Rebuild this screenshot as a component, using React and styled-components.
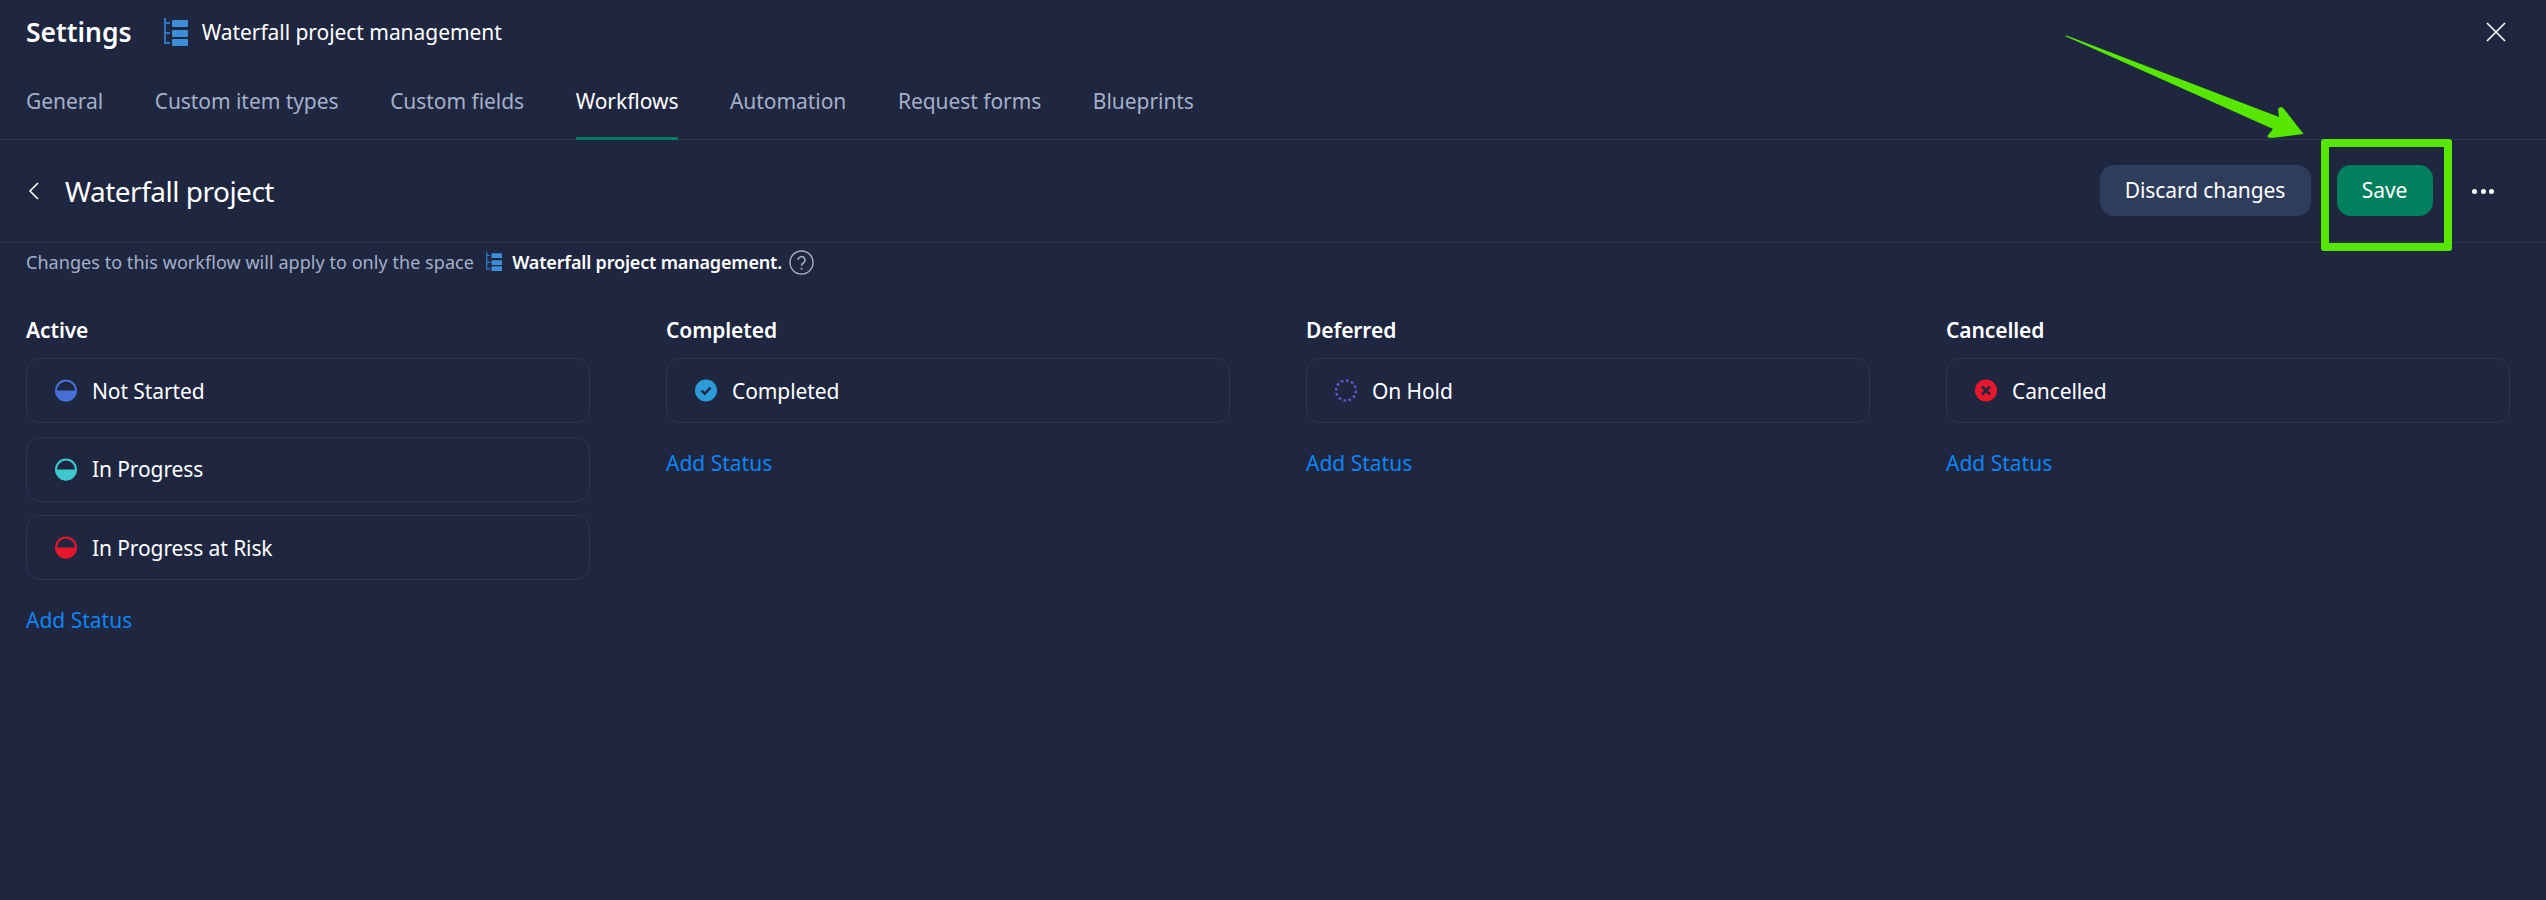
import React from "react";
import styled, { createGlobalStyle } from "styled-components";

const Global = createGlobalStyle`
  html, body { margin: 0; padding: 0; background: #1e2640; }
  body { font-family: "Noto Sans", "Open Sans", sans-serif; color: #fff; }
  * { box-sizing: border-box; }
`;

const Page = styled.div`
  position: relative;
  width: 2546px;
  height: 900px;
  background: #1e2640;
  overflow: hidden;
`;

const Header = styled.header`
  display: flex;
  align-items: center;
  height: 64px;
  padding: 0 40px 0 26px;
`;
const Title = styled.h1`
  margin: 0 32px 0 0;
  font-size: 26.5px;
  font-weight: 600;
`;
const Space = styled.div`
  display: flex;
  align-items: center;
  gap: 14px;
  font-size: 21px;
  letter-spacing: -0.05px;
`;
const Close = styled.button`
  margin-left: auto;
  display: flex;
  padding: 0;
  border: 0;
  background: none;
  color: #fff;
`;

const Tabs = styled.nav`
  display: flex;
  gap: 51.6px;
  height: 76px;
  padding: 0 26px;
  border-bottom: 1px solid #2b3654;
`;
const Tab = styled.div`
  display: flex;
  align-items: center;
  height: 76px;
  font-size: 21px;
  letter-spacing: -0.05px;
  color: ${(p) => (p.$active ? "#fff" : "#a4b0c8")};
  border-bottom: 3px solid ${(p) => (p.$active ? "#01805d" : "transparent")};
`;

const TitleRow = styled.div`
  display: flex;
  align-items: center;
  height: 103px;
  padding: 0 52px 0 28px;
  border-bottom: 1px solid #2b3654;
`;
const Back = styled.button`
  display: flex;
  padding: 0;
  margin-right: 26px;
  border: 0;
  background: none;
  color: #fff;
`;
const WorkflowName = styled.h2`
  margin: 0;
  font-size: 28px;
  font-weight: 400;
  letter-spacing: -0.5px;
`;
const Actions = styled.div`
  margin-left: auto;
  display: flex;
  align-items: center;
`;
const Button = styled.button`
  height: 51px;
  padding: 0;
  width: ${(p) => p.$w}px;
  border: 0;
  border-radius: 14px;
  color: #fff;
  font: inherit;
  font-size: 21px;
  letter-spacing: -0.1px;
  background: ${(p) => p.$bg};
`;
const SaveWrap = styled.div`
  position: relative;
  margin: 0 39.5px 2px 26px;
  display: flex;
`;
const DiscardWrap = styled.div`
  display: flex;
  margin-bottom: 2px;
`;
const Frame = styled.div`
  position: absolute;
  left: -16px;
  right: -19px;
  top: -26px;
  bottom: -35px;
  border: 8px solid #56e600;
  border-radius: 3px;
`;
const More = styled.div`
  display: flex;
  gap: 3.5px;
`;
const Dot = styled.span`
  width: 5px;
  height: 5px;
  border-radius: 50%;
  background: #fff;
`;

const Info = styled.div`
  display: flex;
  align-items: center;
  height: 38px;
  padding-left: 26px;
  font-size: 18px;
  letter-spacing: 0.05px;
  color: #a4b0c8;
`;
const InfoText = styled.span`
  margin-right: 12px;
`;
const InfoSpace = styled.strong`
  margin: 0 7px 0 10px;
  color: #fff;
  font-weight: 600;
  letter-spacing: -0.17px;
`;

const Board = styled.div`
  display: grid;
  grid-template-columns: repeat(4, 564px);
  column-gap: 76px;
  padding: 35px 0 0 26px;
`;
const Column = styled.section`
  display: flex;
  flex-direction: column;
`;
const ColumnTitle = styled.h3`
  margin: 0 0 14px;
  height: 28px;
  line-height: 28px;
  font-size: 21px;
  font-weight: 600;
  letter-spacing: -0.1px;
`;
const Card = styled.div`
  display: flex;
  align-items: center;
  gap: 15px;
  height: 65px;
  margin-bottom: 13.7px;
  padding: 0 28px;
  border: 1px solid #2b3654;
  border-radius: 14px;
  font-size: 21px;
  letter-spacing: -0.1px;
`;
const AddStatus = styled.a`
  display: block;
  margin-top: 12px;
  line-height: 28px;
  font-size: 21px;
  color: #0f85f5;
`;

const ArrowLayer = styled.svg`
  position: absolute;
  left: 2060px;
  top: 30px;
`;

const SpaceIcon = ({ s = 1 }) => (
  <svg width={24 * s} height={28 * s} viewBox="0 0 24 28">
    <path d="M1 0v26M1 5h5M1 15h5M1 25h5" fill="none" stroke="#2f76bf" strokeWidth="2" />
    <rect x="8" y="2" width="16" height="7" rx="1.2" fill="#3d8ed9" />
    <rect x="8" y="12" width="16" height="7" rx="1.2" fill="#3d8ed9" />
    <rect x="8" y="21" width="16" height="7" rx="1.2" fill="#3d8ed9" />
  </svg>
);

const HalfIcon = ({ color }) => (
  <svg width="22" height="23" viewBox="0 0 22 23">
    <circle cx="11" cy="11.5" r="10" fill="none" stroke={color} strokeWidth="2" />
    <path d="M0.5 11.5h21a10.5 11 0 0 1-21 0z" fill={color} />
  </svg>
);
const DoneIcon = () => (
  <svg width="22" height="23" viewBox="0 0 22 23">
    <circle cx="11" cy="11.5" r="11" fill="#2b9cd8" />
    <path d="M6.5 11.5l3.2 3.2 5.8-6" fill="none" stroke="#1e2640" strokeWidth="2.4" />
  </svg>
);
const HoldIcon = () => (
  <svg width="22" height="23" viewBox="0 0 22 23">
    <circle cx="11" cy="11.5" r="10" fill="none" stroke="#6a52d0" strokeWidth="2.4" strokeDasharray="2.6 2.6" />
  </svg>
);
const CancelIcon = () => (
  <svg width="22" height="23" viewBox="0 0 22 23">
    <circle cx="11" cy="11.5" r="11" fill="#e8162b" />
    <path d="M7 7.5l8 8M15 7.5l-8 8" fill="none" stroke="#1e2640" strokeWidth="2.6" />
  </svg>
);

const columns = [
  {
    title: "Active",
    items: [
      ["Not Started", <HalfIcon color="#4570d6" />],
      ["In Progress", <HalfIcon color="#3cc8cc" />],
      ["In Progress at Risk", <HalfIcon color="#e8162b" />],
    ],
  },
  { title: "Completed", items: [["Completed", <DoneIcon />]] },
  { title: "Deferred", items: [["On Hold", <HoldIcon />]] },
  { title: "Cancelled", items: [["Cancelled", <CancelIcon />]] },
];

const tabs = ["General", "Custom item types", "Custom fields", "Workflows", "Automation", "Request forms", "Blueprints"];

export default function App() {
  return (
    <Page>
      <Global />
      <Header>
        <Title>Settings</Title>
        <Space>
          <SpaceIcon />
          Waterfall project management
        </Space>
        <Close aria-label="Close">
          <svg width="20" height="20" viewBox="0 0 20 20">
            <path d="M1 1l18 18M19 1L1 19" stroke="currentColor" strokeWidth="1.6" fill="none" />
          </svg>
        </Close>
      </Header>
      <Tabs>
        {tabs.map((t) => (
          <Tab key={t} $active={t === "Workflows"}>{t}</Tab>
        ))}
      </Tabs>
      <TitleRow>
        <Back aria-label="Back">
          <svg width="11" height="18" viewBox="0 0 11 18">
            <path d="M10 1L2 9l8 8" stroke="currentColor" strokeWidth="1.6" fill="none" />
          </svg>
        </Back>
        <WorkflowName>Waterfall project</WorkflowName>
        <Actions>
          <DiscardWrap>
            <Button $w={211} $bg="#2f3d5c">Discard changes</Button>
          </DiscardWrap>
          <SaveWrap>
            <Button $w={96} $bg="#01805d">Save</Button>
            <Frame />
          </SaveWrap>
          <More>
            <Dot /><Dot /><Dot />
          </More>
        </Actions>
      </TitleRow>
      <Info>
        <InfoText>Changes to this workflow will apply to only the space</InfoText>
        <SpaceIcon s={0.68} />
        <InfoSpace>Waterfall project management.</InfoSpace>
        <svg width="25" height="25" viewBox="0 0 25 25">
          <circle cx="12.5" cy="12.5" r="11.5" fill="none" stroke="#a4b0c8" strokeWidth="1.4" />
          <path d="M9 10a3.5 3.5 0 1 1 5.4 3c-1.3.8-1.9 1.4-1.9 2.8" fill="none" stroke="#a4b0c8" strokeWidth="1.5" />
          <circle cx="12.5" cy="18.8" r="1" fill="#a4b0c8" />
        </svg>
      </Info>
      <Board>
        {columns.map((c) => (
          <Column key={c.title}>
            <ColumnTitle>{c.title}</ColumnTitle>
            {c.items.map(([label, icon]) => (
              <Card key={label}>
                {icon}
                {label}
              </Card>
            ))}
            <AddStatus>Add Status</AddStatus>
          </Column>
        ))}
      </Board>
      <ArrowLayer width="260" height="120" viewBox="0 0 260 120">
        <path
          d="M5 6Q6 5 8 6L219 87 L218 79 Q221 75 224 79 L243.6 104 L212 108 Q206 108 208 105 L213 99 Z"
          fill="#56e600"
        />
      </ArrowLayer>
    </Page>
  );
}
